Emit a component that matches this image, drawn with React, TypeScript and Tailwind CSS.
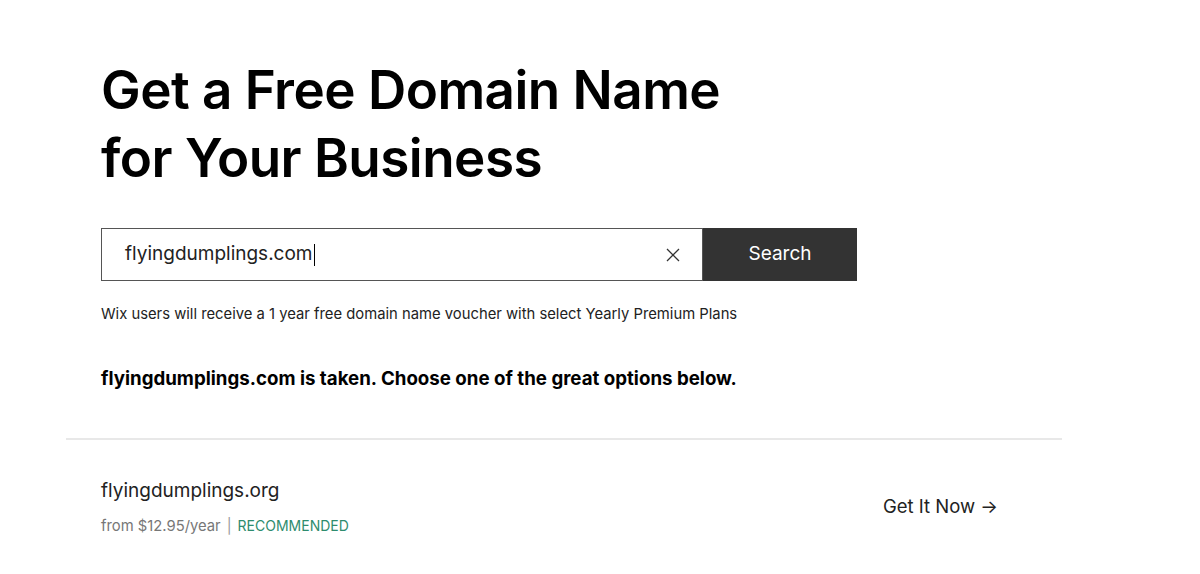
const font = { fontFamily: "Inter, 'Noto Sans', sans-serif" };

function ClearIcon() {
  return (
    <svg width="14" height="14" viewBox="0 0 14 14" fill="none" stroke="#333" strokeWidth="1.3">
      <path d="M1 1 L13 13 M13 1 L1 13" />
    </svg>
  );
}

export default function App() {
  return (
    <div className="min-h-screen w-full bg-white text-[#161616]" style={font}>
      <div className="pl-[101px] pt-[56px]">
        <h1 className="text-[53px] font-semibold leading-[68px] tracking-[-0.01em] text-black">
          Get a Free Domain Name
          <br />
          for Your Business
        </h1>

        <div className="mt-[36px] flex h-[53px] w-[756px]">
          <div className="flex flex-1 items-center border border-[#555] pl-[23px] pr-[22px]">
            <span className="text-[19px] text-[#222]">flyingdumplings.com</span>
            <span className="ml-px h-[22px] w-px bg-black" />
            <span className="ml-auto flex items-center">
              <ClearIcon />
            </span>
          </div>
          <button className="flex w-[154px] items-center justify-center bg-[#333] text-[19px] text-white">
            Search
          </button>
        </div>

        <p className="mt-[22px] text-[14.8px] text-[#222]">
          Wix users will receive a 1 year free domain name voucher with select Yearly Premium Plans
        </p>

        <p className="mt-[40px] text-[18.7px] font-bold text-black">
          flyingdumplings.com is taken. Choose one of the great options below.
        </p>
      </div>

      <div className="ml-[66px] mt-[45px] w-[996px] border-t-2 border-[#e8e8e8]" />

      <div className="ml-[101px] mt-[37px] flex w-[897px] items-center justify-between">
        <div className="flex flex-col">
          <span className="text-[19px] text-[#222]">flyingdumplings.org</span>
          <span className="mt-[9px] flex items-center text-[14.8px]">
            <span className="text-[#777]">from $12.95/year</span>
            <span className="mx-[6px] text-[#999]">|</span>
            <span className="text-[14px] text-[#2e8c6e]">RECOMMENDED</span>
          </span>
        </div>
        <a className="text-[18.5px] text-[#222]">Get It Now →</a>
      </div>
    </div>
  );
}
